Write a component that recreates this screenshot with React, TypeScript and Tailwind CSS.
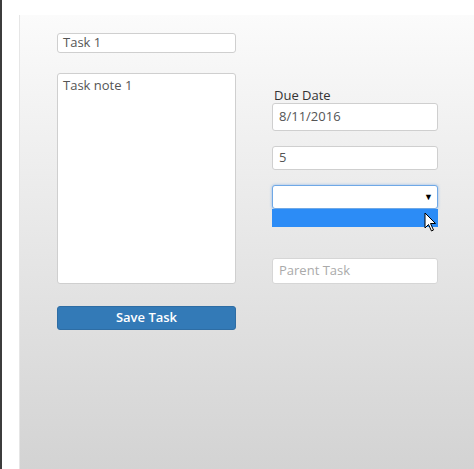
import React from 'react';

const font = { fontFamily: '"Open Sans", "Liberation Sans", sans-serif' };

const Cursor = () => (
  <svg className="absolute left-[152px] top-[3px]" width="14" height="21" viewBox="0 0 14 21">
    <path d="M1 1 L1 16 L4.5 12.5 L7.5 19 L9.5 18 L6.5 11.5 L11.5 11.5 Z" fill="#fff" stroke="#000" strokeWidth="1" strokeLinejoin="round" />
  </svg>
);

const App = () => {
  return (
    <div className="flex h-[469px] w-[474px] overflow-hidden bg-white text-[13px]" style={font}>
      <div className="w-[2px] bg-[#3c3c3c]" />
      <div className="w-[17px] bg-white" />
      <div className="mt-[15px] flex flex-1 gap-[36px] border-l border-[#e6e6e6] bg-gradient-to-b from-[#fbfbfb] to-[#d3d3d3] pl-[37px] pt-[18px]">
        {/* left column */}
        <div className="flex w-[179px] flex-col">
          <div className="flex h-[20px] items-center rounded-[3px] border border-[#cfcfcf] bg-white px-[5px] text-[#555]">
            Task 1
          </div>
          <div className="mt-[20px] h-[211px] rounded-[3px] border border-[#cfcfcf] bg-white px-[5px] pt-[2px] text-[#555]">
            Task note 1
          </div>
          <button className="mt-[22px] h-[24px] rounded-[3px] border border-[#2e6da4] bg-[#337ab7] text-[13px] font-semibold text-white">
            Save Task
          </button>
        </div>

        {/* right column */}
        <div className="flex w-[166px] flex-col pt-[55px]">
          <div className="h-[15px] pl-[2px] text-[13px] leading-[15px] text-[#333]">Due Date</div>
          <div className="flex h-[28px] items-center rounded-[3px] border border-[#cfcfcf] bg-white px-[6px] text-[#555]">
            8/11/2016
          </div>
          <div className="mt-[15px] flex h-[24px] items-center rounded-[3px] border border-[#cfcfcf] bg-white px-[6px] text-[#555]">
            5
          </div>
          <div className="relative mt-[15px]">
            <div className="flex h-[24px] items-center justify-end rounded-[3px] border border-[#6fa8e6] bg-white pr-[4px] shadow-[0_0_3px_rgba(80,150,230,0.6)]">
              <span className="text-[9px] text-black">▼</span>
            </div>
            <div className="absolute left-0 right-0 top-[24px] h-[18px] bg-[#2c8cf6]" />
            <div className="absolute left-0 right-0 top-[24px]">
              <Cursor />
            </div>
          </div>
          <div className="mt-[49px] flex h-[26px] items-center rounded-[3px] border border-[#d6d6d6] bg-white px-[6px] text-[#aaa]">
            Parent Task
          </div>
        </div>
      </div>
    </div>
  );
};

export default App;
